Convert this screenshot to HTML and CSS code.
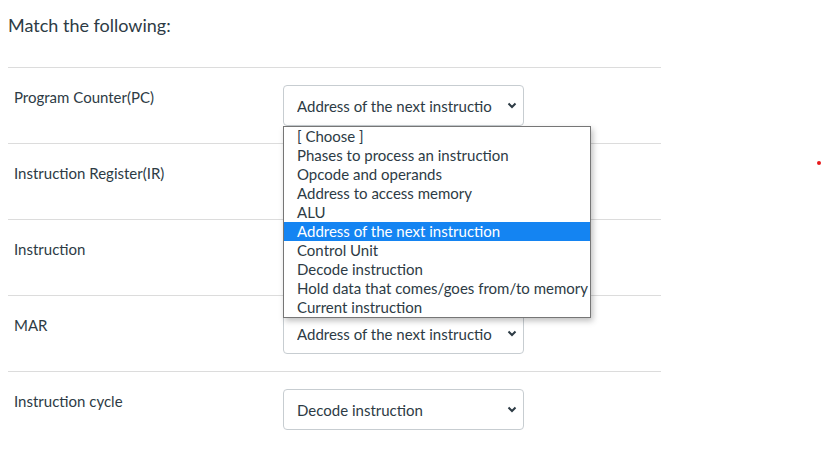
FILE: index.html
```html
<!DOCTYPE html>
<html>
<head>
    <title>Match the following</title>
    <link rel="stylesheet" href="styles.css">
</head>
<body>
    <h2 class="quiz-title">Match the following:</h2>

    <div class="match-list">
        <div class="match-row">
            <div class="match-label">Program Counter(PC)</div>
            <div class="select-wrap">
                <div class="fake-select">
                    <span class="select-text">Address of the next instructio</span>
                    <svg class="chevron" width="10" height="7" viewBox="0 0 10 7"><path d="M1.5 1.5 L5 5 L8.5 1.5" fill="none" stroke="#2d3b45" stroke-width="2"/></svg>
                </div>
                <!-- open dropdown of the first select -->
                <ul class="option-list">
                    <li>[ Choose ]</li>
                    <li>Phases to process an instruction</li>
                    <li>Opcode and operands</li>
                    <li>Address to access memory</li>
                    <li>ALU</li>
                    <li class="selected">Address of the next instruction</li>
                    <li>Control Unit</li>
                    <li>Decode instruction</li>
                    <li>Hold data that comes/goes from/to memory</li>
                    <li>Current instruction</li>
                </ul>
            </div>
        </div>

        <div class="match-row">
            <div class="match-label">Instruction Register(IR)</div>
            <div class="select-wrap">
                <!-- hidden under the open dropdown -->
                <div class="fake-select"></div>
            </div>
        </div>

        <div class="match-row">
            <div class="match-label">Instruction</div>
            <div class="select-wrap">
                <div class="fake-select"></div>
            </div>
        </div>

        <div class="match-row">
            <div class="match-label">MAR</div>
            <div class="select-wrap">
                <div class="fake-select">
                    <span class="select-text">Address of the next instructio</span>
                    <svg class="chevron" width="10" height="7" viewBox="0 0 10 7"><path d="M1.5 1.5 L5 5 L8.5 1.5" fill="none" stroke="#2d3b45" stroke-width="2"/></svg>
                </div>
            </div>
        </div>

        <div class="match-row">
            <div class="match-label">Instruction cycle</div>
            <div class="select-wrap">
                <div class="fake-select">
                    <span class="select-text">Decode instruction</span>
                    <svg class="chevron" width="10" height="7" viewBox="0 0 10 7"><path d="M1.5 1.5 L5 5 L8.5 1.5" fill="none" stroke="#2d3b45" stroke-width="2"/></svg>
                </div>
            </div>
        </div>
    </div>

    <span class="red-dot"></span>
</body>
</html>
```

FILE: styles.css
```css
body {
    font-family: Lato, "Open Sans", sans-serif;
    color: #2d3b45;
    background-color: #fff;
    margin: 8px;
}

.quiz-title {
    font-size: 18px;
    font-weight: normal;
    line-height: 22px;
    margin: 6px 0 31px;
}

.match-list {
    width: 653px;
}

.match-row {
    display: grid;
    grid-template-columns: 269px 241px;
    height: 75px;
    padding: 0 6px;
    border-top: 1px solid #dcdcdc;
}

.match-label {
    font-size: 15px;
    line-height: 20px;
    padding-top: 19px;
}

.select-wrap {
    position: relative;
    padding-top: 17px;
}

.fake-select {
    display: flex;
    align-items: center;
    justify-content: space-between;
    height: 41px;
    box-sizing: border-box;
    border: 1px solid #c7cdd1;
    border-radius: 4px;
    padding: 0 6px 0 13px;
    font-size: 15px;
    background-color: #fff;
}

.select-text {
    white-space: nowrap;
    overflow: hidden;
}

.chevron {
    flex-shrink: 0;
    margin-left: 8px;
}

.option-list {
    position: absolute;
    top: 58px;
    left: 0;
    z-index: 5;
    width: 306px;
    margin: 0;
    padding: 0;
    list-style: none;
    background-color: #fff;
    border: 1px solid #767676;
    box-shadow: 2px 3px 6px rgba(0, 0, 0, 0.25);
    font-size: 15px;
    color: #2d3b45;
}

.option-list li {
    height: 19px;
    line-height: 19px;
    padding-left: 13px;
    white-space: nowrap;
}

.option-list li.selected {
    background-color: #1484f2;
    color: #fff;
}

.red-dot {
    position: absolute;
    left: 817px;
    top: 161px;
    width: 4px;
    height: 4px;
    border-radius: 50%;
    background-color: #e8191b;
}
```
